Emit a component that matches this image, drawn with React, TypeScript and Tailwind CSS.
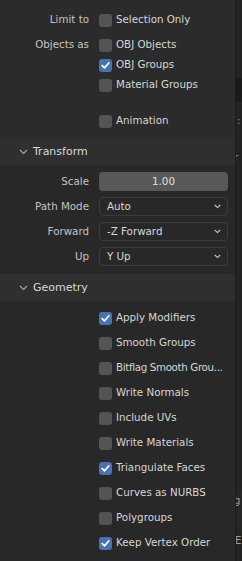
import React from "react";

const font = { fontFamily: '"DejaVu Sans", "Liberation Sans", sans-serif' };

function Check({ on }: { on?: boolean }) {
  return (
    <div
      className={`w-[13px] h-[13px] rounded-[3px] flex items-center justify-center shrink-0 ${
        on ? "bg-[#4772b3]" : "bg-[#545454]"
      }`}
    >
      {on && (
        <svg width="11" height="11" viewBox="0 0 11 11">
          <path d="M2.2 5.6 L4.5 7.9 L8.9 2.8" fill="none" stroke="#ffffff" strokeWidth="1.7" strokeLinecap="round" strokeLinejoin="round" />
        </svg>
      )}
    </div>
  );
}

function CheckItem({ label, on, tight }: { label: string; on?: boolean; tight?: boolean }) {
  return (
    <div className="flex items-center h-[20px] gap-[4px] min-w-0">
      <Check on={on} />
      <span className={`text-[#d6d6d6] whitespace-nowrap ${tight ? "tracking-[-0.35px]" : ""}`}>{label}</span>
    </div>
  );
}

function Row({ label, children }: { label?: string; children: React.ReactNode }) {
  return (
    <div className="flex items-center">
      <div className="w-[89px] text-right text-[#c4c4c4] whitespace-nowrap">{label}</div>
      <div className="ml-[10px] w-[129px] min-w-0">{children}</div>
    </div>
  );
}

function Header({ title }: { title: string }) {
  return (
    <div className="h-[27px] bg-[#2f2f2f] flex items-center pt-[1px]">
      <svg className="ml-[19px]" width="9" height="6" viewBox="0 0 9 6">
        <path d="M1 1 L4.5 4.5 L8 1" fill="none" stroke="#a8a8a8" strokeWidth="1.1" />
      </svg>
      <span className="ml-[5px] text-[#d8d8d8] text-[11px]">{title}</span>
    </div>
  );
}

function Dropdown({ value }: { value: string }) {
  return (
    <div className="h-[19px] rounded-[4px] bg-[#282828] border border-[#3c3c3c] flex items-center pl-[7px] pr-[6px]">
      <span className="text-[#d8d8d8] flex-1">{value}</span>
      <svg width="7" height="5" viewBox="0 0 7 5">
        <path d="M0.8 1 L3.5 3.6 L6.2 1" fill="none" stroke="#c8c8c8" strokeWidth="1.1" />
      </svg>
    </div>
  );
}

export default function App() {
  return (
    <div className="w-[242px] h-[561px] flex overflow-hidden text-[10.3px] bg-[#2a2a2a]" style={font}>
      <div className="w-[235px] shrink-0 flex flex-col">
        <div className="bg-[#2b2b2b] pt-[10px] pb-[7px] flex flex-col">
          <Row label="Limit to">
            <CheckItem label="Selection Only" />
          </Row>
          <div className="mt-[5px]">
            <Row label="Objects as">
              <CheckItem label="OBJ Objects" />
            </Row>
            <Row>
              <CheckItem label="OBJ Groups" on />
            </Row>
            <Row>
              <CheckItem label="Material Groups" />
            </Row>
          </div>
          <div className="mt-[16px]">
            <Row>
              <CheckItem label="Animation" />
            </Row>
          </div>
        </div>
        <Header title="Transform" />
        <div className="bg-[#282828] pt-[7px] pb-[8px] flex flex-col gap-[6px]">
          <Row label="Scale">
            <div className="h-[19px] rounded-[4px] bg-[#585858] flex items-center justify-center text-[#e0e0e0]">1.00</div>
          </Row>
          <Row label="Path Mode">
            <Dropdown value="Auto" />
          </Row>
          <Row label="Forward">
            <Dropdown value="-Z Forward" />
          </Row>
          <Row label="Up">
            <Dropdown value="Y Up" />
          </Row>
        </div>
        <Header title="Geometry" />
        <div className="bg-[#282828] flex-1 pt-[7px] flex flex-col gap-[5px]">
          {[
            ["Apply Modifiers", true],
            ["Smooth Groups", false],
            ["Bitflag Smooth Grou...", false],
            ["Write Normals", false],
            ["Include UVs", false],
            ["Write Materials", false],
            ["Triangulate Faces", true],
            ["Curves as NURBS", false],
            ["Polygroups", false],
            ["Keep Vertex Order", true],
          ].map(([l, on]) => (
            <Row key={l as string}>
              <CheckItem label={l as string} on={on as boolean} tight={(l as string).startsWith("Bitflag")} />
            </Row>
          ))}
        </div>
      </div>
      <div className="w-[7px] shrink-0 bg-[#232323] border-l border-[#1c1c1c] relative overflow-hidden text-[#9a9a9a] text-[10px]">
        <div className="absolute left-0 top-[78px] w-full h-[24px] bg-[#1b1b1b]" />
        <div className="absolute left-[1px] top-[116px] leading-none">:</div>
        <div className="absolute left-[-2px] top-[153px] leading-none">r</div>
        <div className="absolute left-0 top-[490px] w-full h-[40px] bg-[#262626]" />
        <div className="absolute left-[-2px] top-[496px] leading-none">g</div>
        <div className="absolute left-[-1px] top-[536px] leading-none">E</div>
      </div>
    </div>
  );
}
